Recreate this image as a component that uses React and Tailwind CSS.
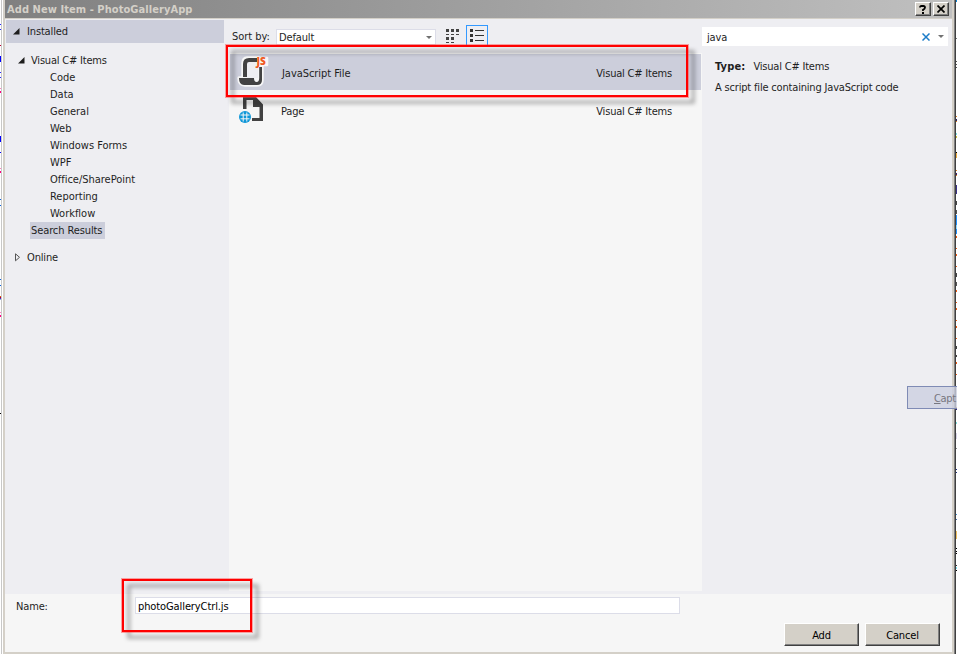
import clsx from 'clsx'

const CATEGORIES = ['Code', 'Data', 'General', 'Web', 'Windows Forms', 'WPF', 'Office/SharePoint', 'Reporting', 'Workflow']

// [y, height, colour] of the editor text that peeks out beside the dialog
const LEFT_MARKS = [
  [24, 1, '#2a2aff'], [29, 1, '#2a2aff'], [45, 1, '#c00030'], [56, 6, '#0000ff'],
  [72, 1, '#2a2aff'], [77, 1, '#2a2aff'], [88, 1, '#ff80c0'], [91, 2, '#ff0080'],
  [136, 6, '#0000ff'], [152, 1, '#0000ff'], [168, 1, '#ff80c0'], [171, 2, '#ff0080'],
  [199, 1, '#0a66e0'], [205, 1, '#0a66e0'], [279, 1, '#0a66e0'], [285, 1, '#0a66e0'],
  [296, 1, '#e06000'], [297, 1, '#a00040'], [298, 1, '#6020c0'], [299, 1, '#80c0e0'],
  [312, 1, '#ff80c0'], [315, 2, '#ff0080'], [413, 1, '#000000'],
]

const RIGHT_MARKS = [
  [0, 2, '#0a84d8'], [38, 1, '#777777'], [61, 1, '#555555'], [64, 1, '#555555'], [67, 1, '#555555'],
  [116, 1, '#e08020'], [119, 2, '#302060'], [121, 1, '#e08020'], [133, 2, '#80e0e0'], [136, 2, '#d0c040'],
  [152, 1, '#000000'], [153, 5, '#f0b040'], [170, 1, '#e08020'], [173, 2, '#402060'], [175, 1, '#e08020'],
  [185, 9, '#3c3489'], [201, 4, '#444444'], [210, 4, '#555555'], [215, 10, '#1e90ff'], [225, 4, '#90d8ff'],
  [229, 5, '#1e90ff'], [236, 2, '#f05a10'], [248, 1, '#f05a10'], [254, 2, '#f05a10'], [266, 1, '#f05a10'],
  [273, 4, '#444444'], [282, 4, '#555555'], [290, 2, '#f05a10'], [302, 1, '#f05a10'], [308, 2, '#f05a10'],
  [320, 1, '#f05a10'], [326, 2, '#f05a10'], [338, 1, '#f05a10'], [346, 3, '#444444'], [355, 2, '#444444'],
  [362, 2, '#f05a10'], [374, 1, '#f05a10'], [407, 1, '#e08020'], [408, 2, '#302080'], [422, 2, '#80e0e0'],
  [433, 6, '#d8d4e8'], [448, 1, '#888888'], [469, 1, '#203080'], [472, 1, '#203080'], [514, 1, '#4090d0'],
  [519, 1, '#4070b0'], [531, 8, '#f0c060'], [548, 1, '#000000'], [551, 1, '#000000'], [553, 1, '#000000'],
  [565, 1, '#333333'], [567, 2, '#80e0f0'], [570, 1, '#000000'],
]

function EdgeMarks({ marks }) {
  return (
    <svg width="1" height="654" className="shrink-0 bg-white" shapeRendering="crispEdges">
      {marks.map(([y, h, fill]) => (
        <rect key={y} x="0" y={y} width="1" height={h} fill={fill} />
      ))}
    </svg>
  )
}

function ScriptIcon() {
  return (
    <svg width="34" height="36" viewBox="0 0 34 36" className="shrink-0">
      <path
        d="M11 4h12v4h3v18q0 5-5 5H9q-6 0-6-7h4V9q0-5 4-5Z"
        fill="#f6f6f6" stroke="#f6f6f6" strokeWidth="3.4" strokeLinejoin="round"
      />
      <path d="M21 4h10v7H21Z" fill="#f6f6f6" stroke="#f6f6f6" strokeWidth="2.6" strokeLinejoin="round" />
      <path d="M11 8h11v16H11Z" fill="#eeeef2" />
      <path d="M7 23V10q0-6 6-6h8v4h-8q-2 0-2 2v13Z" fill="#424242" />
      <path d="M3 24h15q0 4 2.6 4t2.6-4V13H26v13q0 5-5 5H8q-5 0-5-7Z" fill="#424242" />
      <text x="20.6" y="11.2" className="font-['Open_Sans',sans-serif] text-[10px] font-extrabold tracking-[-0.2px] [font-stretch:normal]" fill="#f05a22">JS</text>
    </svg>
  )
}

function PageIcon() {
  return (
    <svg width="34" height="32" viewBox="0 0 34 32" className="shrink-0">
      <path d="M7 15V3h13l7 7.5V27H16v-3h7.500V13H17V6h-6.500v9Z" fill="#424242" />
      <circle cx="9" cy="23" r="7.3" fill="#f6f6f6" />
      <circle cx="9" cy="23" r="6" fill="#0e97d8" />
      <path d="M4.500 21h9M4.500 24.800h9M7.200 18.500v9M10.800 18.500v9" stroke="#f6f6f6" strokeWidth="1" fill="none" />
    </svg>
  )
}

function DownArrow({ className }) {
  return (
    <svg width="6" height="3" viewBox="0 0 6 3" className={clsx('shrink-0', className)}>
      <path d="M0 0h6L3 3Z" fill="#717171" />
    </svg>
  )
}

function Expanded() {
  return (
    <svg width="7" height="7" viewBox="0 0 7 7" className="shrink-0">
      <path d="M6.500 0v6.500H0Z" fill="#1e1e1e" />
    </svg>
  )
}

function ResultRow({ icon, name, selected }) {
  return (
    <div className={clsx('ml-px mr-px flex items-center pl-[6px] pr-[29px]', selected ? 'h-[36px] bg-[#cccedb]' : 'h-[40px]')}>
      {icon}
      <span className={clsx('flex-1 pt-[4px]', selected ? 'pl-[12px] tracking-[-0.05px]' : 'pl-[11px]')}>{name}</span>
      <span className="pt-[4px] tracking-[-0.2px]">Visual C# Items</span>
    </div>
  )
}

function CaptionButton({ children }) {
  return (
    <button className="flex h-[14px] w-[16px] items-center justify-center border border-t-white border-l-white border-r-[#404040] border-b-[#404040] bg-[#d4d0c8] shadow-[inset_-1px_-1px_0_#808080]">
      {children}
    </button>
  )
}

function DialogButton({ children }) {
  return (
    <button className="h-[23px] w-[75px] border border-t-white border-l-white border-r-[#404040] border-b-[#404040] bg-[#d4d0c8] pt-px text-center leading-[21px] text-black shadow-[inset_-1px_-1px_0_#808080]">
      {children}
    </button>
  )
}

function TitleBar() {
  return (
    <div className="flex h-[19px] shrink-0 items-center border-b border-[#d4d0c8] bg-linear-to-r from-[#808080] to-[#c0c0c0] pl-[2px] pr-[3px]">
      <span className="flex-1 pt-px text-[11px] font-bold tracking-[0.07px] text-[#d4d0c8]">Add New Item - PhotoGalleryApp</span>
      <div className="flex gap-[2px]">
        <CaptionButton>
          <svg width="8" height="9" viewBox="0 0 8 9">
            <path d="M1 2.500Q1 1 2.500 1h2Q6 1 6 2.500T4 4.800V6" fill="none" stroke="#000" strokeWidth="1.8" />
            <path d="M3 7h2v2H3Z" />
          </svg>
        </CaptionButton>
        <CaptionButton>
          <svg width="8" height="8" viewBox="0 0 8 8">
            <path d="m.5.5 7 7m0-7-7 7" stroke="#000" strokeWidth="1.7" />
          </svg>
        </CaptionButton>
      </div>
    </div>
  )
}

function Sidebar() {
  return (
    <div className="w-[224px] shrink-0 pt-px pl-px">
      <div className="flex h-[23px] w-[218px] items-center gap-[7px] bg-[#cccedb] pl-[7px]">
        <Expanded />
        <span className="pt-px">Installed</span>
      </div>
      <div className="mt-[9px] flex h-[17px] items-center gap-[6px] pl-[12px]">
        <Expanded />
        <span className="tracking-[-0.2px]">Visual C# Items</span>
      </div>
      {CATEGORIES.map((name) => (
        <div key={name} className="h-[17px] pl-[44px] leading-[17px] tracking-[-0.02px]">{name}</div>
      ))}
      <div className="ml-[24px] h-[17px] w-[75px] bg-[#cccedb] pl-px leading-[17px] tracking-[-0.1px]">Search Results</div>
      <div className="mt-[10px] flex h-[17px] items-center gap-[7px] pl-[9px]">
        <svg width="5" height="9" viewBox="0 0 5 9" className="shrink-0">
          <path d="M.5.8v7l4-3.500Z" fill="none" stroke="#555" />
        </svg>
        <span>Online</span>
      </div>
    </div>
  )
}

function Results() {
  return (
    <div className="flex w-[473px] shrink-0 flex-col">
      <div className="flex h-[34px] shrink-0 items-start pl-[3px]">
        <span className="mt-[10px] w-[39px] leading-[15px] tracking-[-0.05px]">Sort by:</span>
        <div className="ml-[5px] mt-[10px] flex h-[16px] w-[160px] items-center border border-[#dcdde8] bg-white pl-[2px] pr-[3px]">
          <span className="flex-1 pt-px">Default</span>
          <DownArrow className="mt-px" />
        </div>
        <svg width="13" height="14" className="ml-[10px] mt-[10px]" fill="#424242" shapeRendering="crispEdges">
          <path d="M0 0h3v3H0zM5 0h3v3H5zM10 0h3v3h-3zM0 5h3v1H0zM5 5h3v1H5zM10 5h3v1h-3zM0 8h3v3H0zM5 8h3v3H5zM0 13h3v1H0zM5 13h3v1H5z" />
        </svg>
        <div className="ml-[7px] mt-[6px] flex h-[22px] w-[22px] shrink-0 justify-center border border-[#3399ff] pt-[3px]">
          <svg width="14" height="13" fill="#333" shapeRendering="crispEdges">
            <path d="M0 0h3v3H0zM0 5h3v3H0zM0 10h3v3H0zM5 1h9v1H5zM5 6h9v1H5zM5 11h9v1H5z" />
          </svg>
        </div>
      </div>
      <div className="h-[538px] bg-[#f6f6f6] pt-px">
        <ResultRow icon={<ScriptIcon />} name="JavaScript File" selected />
        <ResultRow icon={<PageIcon />} name="Page" />
      </div>
    </div>
  )
}

function Details() {
  return (
    <div className="flex-1 pt-[8px]">
      <div className="flex h-[19px] w-[246px] items-center bg-white pl-[5px] pr-[4px]">
        <span className="flex-1 pt-[2px]">java</span>
        <svg width="8" height="8" viewBox="0 0 8 8">
          <path d="m.5.5 7 7m0-7-7 7" stroke="#1c7cc8" strokeWidth="1.5" />
        </svg>
        <DownArrow className="ml-[8px]" />
      </div>
      <div className="pl-[13px]">
        <p className="mt-[13px] leading-[16px] tracking-[-0.2px]">
          <b className="mr-[8px] tracking-[0.15px]">Type:</b>Visual C# Items
        </p>
        <p className="mt-[5px] leading-[16px] tracking-[-0.18px]">A script file containing JavaScript code</p>
      </div>
    </div>
  )
}

function Footer() {
  return (
    <div className="h-[58px] shrink-0 bg-[#f6f6f6] pt-[3px]">
      <div className="flex h-[17px] items-center pl-[11px]">
        <span className="w-[119px] pt-[2px]">Name:</span>
        <div className="flex h-[17px] w-[545px] items-center border border-[#dcdde8] bg-white pl-[2px]">
          <span className="pt-[2px] tracking-[-0.1px] text-black">photoGalleryCtrl.js</span>
        </div>
      </div>
      <div className="mt-[9px] flex justify-end gap-[6px] pr-[12px]">
        <DialogButton>Add</DialogButton>
        <DialogButton>Cancel</DialogButton>
      </div>
    </div>
  )
}

// Red callout frame laid over the dialog
function Callout({ className }) {
  return (
    <div className={clsx('pointer-events-none absolute border-2 border-[#ff0000] shadow-[0_0_0_1px_rgba(255,60,60,0.45)] drop-shadow-[6px_6px_2px_rgba(0,0,0,0.4)]', className)} />
  )
}

export default function App() {
  return (
    <div className="relative flex h-[654px] w-[957px] overflow-hidden bg-white font-['DejaVu_Sans_Condensed','DejaVu_Sans',sans-serif] text-[11px] leading-[14px] tracking-[-0.15px] whitespace-nowrap text-[#1e1e1e] [font-stretch:condensed]">
      <EdgeMarks marks={LEFT_MARKS} />
      <div className="mr-px w-px shrink-0 bg-[#c8c8c8]" />
      <div className="flex w-[951px] shrink-0 flex-col border-x-2 border-b-2 border-[#d4d0c8] bg-[#eeeef2]">
        <TitleBar />
        <div className="flex h-[575px] shrink-0">
          <Sidebar />
          <Results />
          <Details />
        </div>
        <Footer />
      </div>
      <div className="w-px shrink-0 bg-[#808080]" />
      <div className="w-px shrink-0 bg-[#404040]" />
      <EdgeMarks marks={RIGHT_MARKS} />

      <div className="absolute top-[386px] left-[907px] h-[23px] w-[50px] border border-r-0 border-[#7f8bb5] bg-[#cccfe0]/80 pl-[26px] leading-[23px] tracking-[-0.35px] text-[#77777f]">
        <span className="underline">C</span>apt
      </div>
      <Callout className="top-[45px] left-[226px] h-[52px] w-[462px]" />
      <Callout className="top-[579px] left-[122px] h-[53px] w-[130px]" />
    </div>
  )
}
